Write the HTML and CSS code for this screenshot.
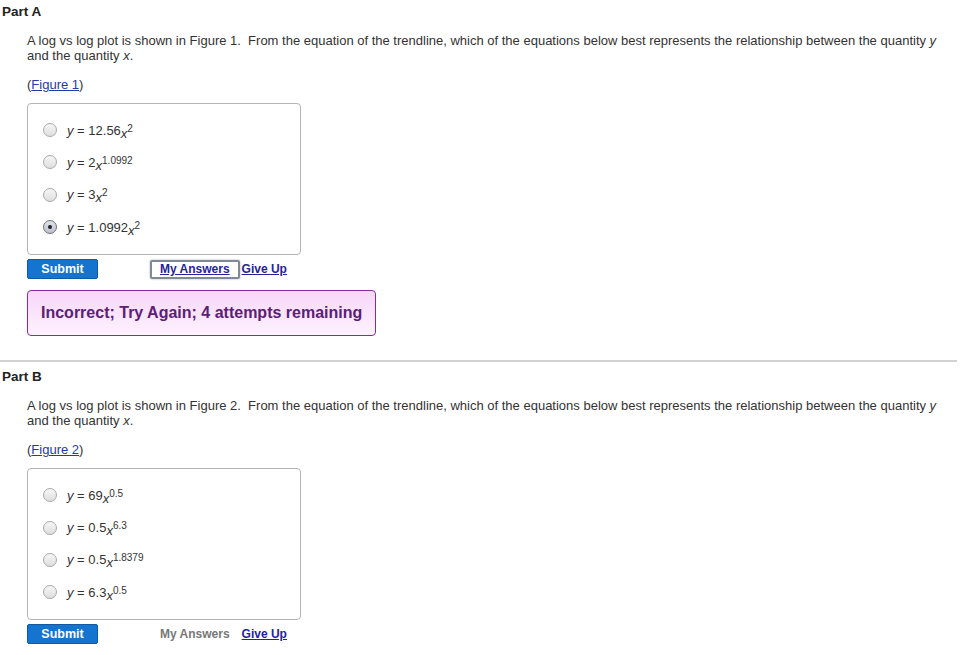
FILE: index.html
```html
<!DOCTYPE html>
<html>
<head>
<meta charset="utf-8">
<link rel="stylesheet" href="styles.css">
</head>
<body>
<div class="part">
  <h2 class="part-title">Part A</h2>
  <div class="part-body">
    <p class="question">A log vs log plot is shown in Figure 1.&nbsp; From the equation of the trendline, which of the equations below best represents the relationship between the quantity <i>y</i> and the quantity <i>x</i>.</p>
    <p class="fig">(<a href="#">Figure 1</a>)</p>
    <div class="choices">
      <label class="choice"><span class="radio"></span><span class="eq"><i>y</i> = 12.56<i class="xv">x</i><sup>2</sup></span></label>
      <label class="choice"><span class="radio"></span><span class="eq"><i>y</i> = 2<i class="xv">x</i><sup>1.0992</sup></span></label>
      <label class="choice"><span class="radio"></span><span class="eq"><i>y</i> = 3<i class="xv">x</i><sup>2</sup></span></label>
      <label class="choice"><span class="radio checked"></span><span class="eq"><i>y</i> = 1.0992<i class="xv">x</i><sup>2</sup></span></label>
    </div>
    <div class="actions">
      <button class="submit">Submit</button>
      <a href="#" class="link focused">My Answers</a>
      <a href="#" class="link">Give Up</a>
    </div>
    <div class="feedback">Incorrect; Try Again; 4 attempts remaining</div>
  </div>
</div>
<hr class="sep">
<div class="part">
  <h2 class="part-title">Part B</h2>
  <div class="part-body">
    <p class="question">A log vs log plot is shown in Figure 2.&nbsp; From the equation of the trendline, which of the equations below best represents the relationship between the quantity <i>y</i> and the quantity <i>x</i>.</p>
    <p class="fig">(<a href="#">Figure 2</a>)</p>
    <div class="choices">
      <label class="choice"><span class="radio"></span><span class="eq"><i>y</i> = 69<i class="xv">x</i><sup>0.5</sup></span></label>
      <label class="choice"><span class="radio"></span><span class="eq"><i>y</i> = 0.5<i class="xv">x</i><sup>6.3</sup></span></label>
      <label class="choice"><span class="radio"></span><span class="eq"><i>y</i> = 0.5<i class="xv">x</i><sup>1.8379</sup></span></label>
      <label class="choice"><span class="radio"></span><span class="eq"><i>y</i> = 6.3<i class="xv">x</i><sup>0.5</sup></span></label>
    </div>
    <div class="actions">
      <button class="submit">Submit</button>
      <span class="link disabled">My Answers</span>
      <a href="#" class="link">Give Up</a>
    </div>
  </div>
</div>
</body>
</html>
```

FILE: styles.css
```css
html, body {
  margin: 0;
  padding: 0;
  background: #fff;
}
body {
  font-family: "Liberation Sans", Arial, sans-serif;
  font-size: 13px;
  color: #333;
  width: 968px;
}
.part {
  padding: 0 0 0 2px;
}
.part-title {
  margin: 0;
  padding-top: 4px;
  font-size: 13.5px;
  font-weight: bold;
  line-height: 16px;
  color: #222;
}
.part-body {
  padding-left: 25px;
  padding-right: 22px;
}
.question {
  margin: 13px 0 0 0;
  line-height: 15px;
  font-size: 13px;
}
.fig {
  margin: 14px 0 0 0;
  line-height: 15px;
  font-size: 13px;
}
.fig a {
  color: #2639a8;
  text-decoration: underline;
}
.choices {
  margin-top: 11px;
  width: 272px;
  border: 1px solid #b5b5b5;
  border-radius: 4px;
  padding: 10px 0 11px;
}
.choice {
  display: flex;
  align-items: center;
  height: 32.3px;
  padding-left: 15px;
}
.radio {
  width: 14px;
  height: 14px;
  border-radius: 50%;
  border: 1px solid #aaaaaa;
  box-sizing: border-box;
  background: linear-gradient(#f6f6f6, #dedede);
  display: flex;
  align-items: center;
  justify-content: center;
  margin-right: 10px;
  flex: none;
}
.radio.checked {
  border-color: #707070;
  background: linear-gradient(#dfe2ec, #bcc1d2);
}
.radio.checked::after {
  content: "";
  width: 4px;
  height: 4px;
  border-radius: 50%;
  background: #222;
}
.eq {
  font-size: 13px;
  line-height: 16px;
  position: relative;
  top: 1px;
}
.eq i {
  font-style: italic;
}
.eq .xv {
  position: relative;
  top: 3px;
}
.eq sup {
  font-size: 10px;
  vertical-align: baseline;
  position: relative;
  top: -3px;
}
.actions {
  display: flex;
  align-items: center;
  margin-top: 4px;
  height: 20px;
}
.submit {
  width: 71px;
  height: 20px;
  padding: 0;
  border: 1px solid #0f5aa0;
  border-radius: 2px;
  background: #1474cf;
  color: #fff;
  font-family: "Liberation Sans", Arial, sans-serif;
  font-size: 12.5px;
  font-weight: bold;
  margin-right: 52px;
}
.link {
  font-size: 12px;
  font-weight: bold;
  color: #25239a;
  text-decoration: underline;
  padding: 1px 8px;
  line-height: 15px;
}
.link.focused {
  border: 2px solid #7f8a96;
  border-radius: 2px;
  box-shadow: 0 0 2px #9aa3ad;
  padding: 0 8px;
}
.link + .link {
  padding-left: 2px;
}
.link.disabled {
  color: #777;
  text-decoration: none;
  padding: 2px 10px;
}
.link.disabled + .link {
  padding-left: 2px;
}
.feedback {
  margin-top: 11px;
  width: 334px;
  height: 44px;
  border: 1px solid #8b2a9e;
  border-radius: 4px;
  background: linear-gradient(#f7d6fa, #fdf2fd);
  color: #5a2076;
  font-size: 16px;
  font-weight: bold;
  display: flex;
  align-items: center;
  padding-left: 13px;
}
.sep {
  margin: 24px 11px 3px 0;
  border: 0;
  height: 2px;
  background: #d2d2d2;
}
```
